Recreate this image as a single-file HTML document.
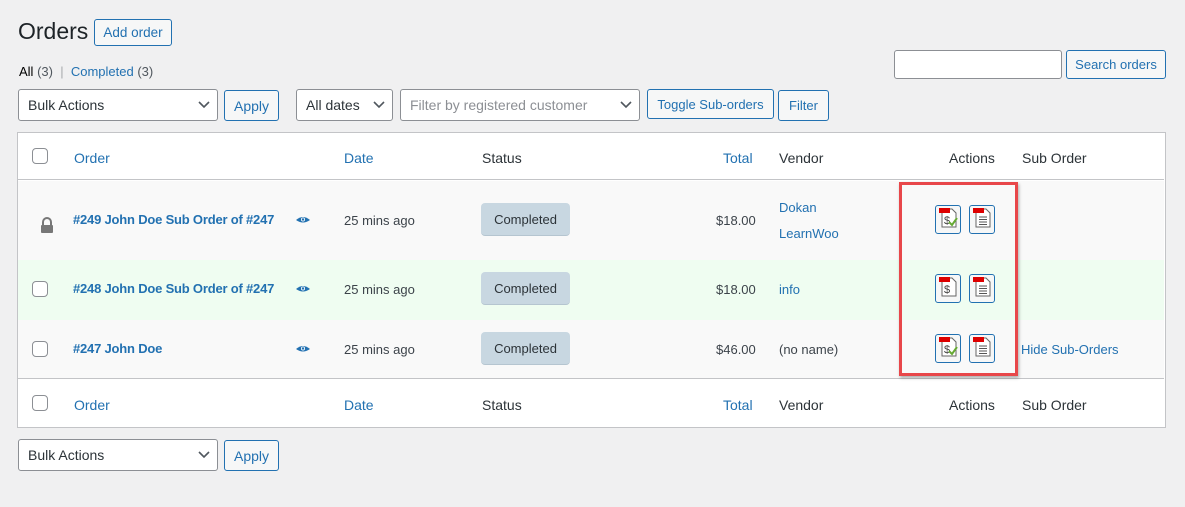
<!DOCTYPE html>
<html><head><style>
*{box-sizing:border-box;margin:0;padding:0}
body{width:1185px;height:507px;background:#f0f0f1;font-family:"Liberation Sans",Arial,sans-serif;font-size:13px;color:#3c434a;position:relative;overflow:hidden}
.a{position:absolute;white-space:nowrap}
.btn{position:absolute;border:1px solid #2271b1;border-radius:3px;background:#f6f7f7;color:#2271b1;font-size:13px;display:flex;align-items:center;justify-content:center}
.sel{position:absolute;border:1px solid #8c8f94;border-radius:3px;background:#fff;font-size:14px;color:#2c3338;padding-left:9px;display:flex;align-items:center}
.sel svg{position:absolute;right:7px;top:50%;margin-top:-4px}
.inp{position:absolute;border:1px solid #8c8f94;border-radius:3px;background:#fff}
.link{color:#2271b1}
.cb{position:absolute;width:16px;height:16px;border:1px solid #8c8f94;border-radius:4px;background:#fff}
.row{position:absolute;left:18px;width:1146px}
.status{position:absolute;width:89px;height:33px;background:#c8d7e1;border-radius:4px;color:#2c3338;font-size:13px;display:flex;align-items:center;justify-content:center;border-bottom:1px solid #b5c5d0}
.bold{font-weight:bold;color:#2271b1;font-size:13px;letter-spacing:-0.2px}
.ib{position:absolute;width:26px;height:29px;border:1px solid #2271b1;border-radius:3px;background:#f6f7f7}
</style></head><body>
<div class="a" style="left:18px;top:18px;font-size:23px;color:#1d2327">Orders</div>
<div class="btn" style="left:94px;top:19px;width:78px;height:27px;font-size:13.5px">Add order</div>
<div class="a" style="left:19px;top:64px;font-size:13px"><span style="color:#000">All</span> <span style="color:#50575e">(3)</span> <span style="color:#a7aaad">&nbsp;|&nbsp;</span> <span class="link">Completed</span> <span style="color:#50575e">(3)</span></div>
<div class="inp" style="left:894px;top:50px;width:168px;height:29px"></div>
<div class="btn" style="left:1066px;top:50px;width:100px;height:29px">Search orders</div>

<svg width="0" height="0" style="position:absolute"><defs><path id="ch" d="M1 1l5 5 5-5" fill="none" stroke="#50575e" stroke-width="1.6"/></defs></svg>
<div class="sel" style="left:18px;top:89px;width:200px;height:32px">Bulk Actions<svg width="12" height="8"><use href="#ch"/></svg></div>
<div class="btn" style="left:224px;top:90px;width:55px;height:31px;font-size:14px">Apply</div>
<div class="sel" style="left:296px;top:89px;width:97px;height:32px">All dates<svg width="12" height="8"><use href="#ch"/></svg></div>
<div class="sel" style="left:400px;top:89px;width:240px;height:32px;color:#8c8f94">Filter by registered customer<svg width="12" height="8"><use href="#ch"/></svg></div>
<div class="btn" style="left:647px;top:89px;width:127px;height:30px">Toggle Sub-orders</div>
<div class="btn" style="left:778px;top:90px;width:51px;height:31px">Filter</div>

<div style="position:absolute;left:17px;top:132px;width:1149px;height:296px;border:1px solid #c3c4c7;background:#fff"></div>
<div class="row" style="top:133px;height:47px;background:#fff;border-bottom:1px solid #c3c4c7"></div>
<div class="row" style="top:181px;height:79px;background:#f9f9f9"></div>
<div class="row" style="top:260px;height:60px;background:#effdf1"></div>
<div class="row" style="top:320px;height:58px;background:#f9f9f9"></div>
<div class="row" style="top:378px;height:49px;background:#fff;border-top:1px solid #c3c4c7"></div>

<div class="cb" style="left:32px;top:148px"></div>
<div class="a link" style="left:74px;top:150px;font-size:14px">Order</div>
<div class="a link" style="left:344px;top:150px;font-size:14px">Date</div>
<div class="a" style="left:482px;top:150px;font-size:14px;color:#2c3338">Status</div>
<div class="a link" style="left:723px;top:150px;font-size:14px">Total</div>
<div class="a" style="left:779px;top:150px;font-size:14px;color:#2c3338">Vendor</div>
<div class="a" style="left:949px;top:150px;font-size:14px;color:#2c3338">Actions</div>
<div class="a" style="left:1022px;top:150px;font-size:14px;color:#2c3338">Sub Order</div>
<div class="cb" style="left:32px;top:395px"></div>
<div class="a link" style="left:74px;top:397px;font-size:14px">Order</div>
<div class="a link" style="left:344px;top:397px;font-size:14px">Date</div>
<div class="a" style="left:482px;top:397px;font-size:14px;color:#2c3338">Status</div>
<div class="a link" style="left:723px;top:397px;font-size:14px">Total</div>
<div class="a" style="left:779px;top:397px;font-size:14px;color:#2c3338">Vendor</div>
<div class="a" style="left:949px;top:397px;font-size:14px;color:#2c3338">Actions</div>
<div class="a" style="left:1022px;top:397px;font-size:14px;color:#2c3338">Sub Order</div>

<svg width="0" height="0" style="position:absolute"><defs>
<g id="eye"><path d="M0 4Q7 -2 14 4Q7 9 0 4Z" fill="#2271b1"/><circle cx="7" cy="3.5" r="2" fill="#fff"/><circle cx="7" cy="3.5" r="1.2" fill="#2271b1"/></g>
<g id="inv"><path d="M6 3h10l4 4v14H6z" fill="#fff" stroke="#666"/><rect x="3" y="2" width="11" height="5" fill="#d00"/><text x="8" y="18" font-size="11" font-family="Liberation Sans" fill="#444">$</text></g>
<g id="doc"><path d="M6 3h10l4 4v14H6z" fill="#fff" stroke="#666"/><rect x="3" y="2" width="11" height="5" fill="#d00"/><path d="M9 11h8M9 13.5h8M9 16h8M9 18.5h8" stroke="#555"/></g>
<path id="ck" d="M13 16l3 3 5-7" fill="none" stroke="#6a3" stroke-width="2"/>
</defs></svg>

<svg class="a" style="left:40px;top:217px" width="14" height="16"><path d="M3 8V5a4 4 0 0 1 8 0v3" fill="none" stroke="#777" stroke-width="2"/><rect x="1" y="8" width="12" height="8" rx="1" fill="#777"/></svg>
<div class="a bold" style="left:73px;top:212px">#249 John Doe Sub Order of #247</div>
<svg class="a" style="left:296px;top:216px" width="14" height="8"><use href="#eye"/></svg>
<div class="a" style="left:344px;top:213px">25 mins ago</div>
<div class="status" style="left:481px;top:203px">Completed</div>
<div class="a" style="left:716px;top:213px">$18.00</div>
<div class="a link" style="left:779px;top:200px">Dokan</div>
<div class="a link" style="left:779px;top:226px">LearnWoo</div>
<div class="cb" style="left:32px;top:281px"></div>
<div class="a bold" style="left:73px;top:281px">#248 John Doe Sub Order of #247</div>
<svg class="a" style="left:296px;top:285px" width="14" height="8"><use href="#eye"/></svg>
<div class="a" style="left:344px;top:282px">25 mins ago</div>
<div class="status" style="left:481px;top:272px">Completed</div>
<div class="a" style="left:716px;top:282px">$18.00</div>
<div class="a link" style="left:779px;top:282px">info</div>
<div class="cb" style="left:32px;top:341px"></div>
<div class="a bold" style="left:73px;top:341px">#247 John Doe</div>
<svg class="a" style="left:296px;top:345px" width="14" height="8"><use href="#eye"/></svg>
<div class="a" style="left:344px;top:342px">25 mins ago</div>
<div class="status" style="left:481px;top:332px">Completed</div>
<div class="a" style="left:716px;top:342px">$46.00</div>
<div class="a" style="left:779px;top:342px">(no name)</div>
<div class="a link" style="left:1021px;top:342px">Hide Sub-Orders</div>

<div class="ib" style="left:935px;top:205px"><svg width="24" height="27"><use href="#inv"/><use href="#ck"/></svg></div>
<div class="ib" style="left:969px;top:205px"><svg width="24" height="27"><use href="#doc"/></svg></div>
<div class="ib" style="left:935px;top:274px"><svg width="24" height="27"><use href="#inv"/></svg></div>
<div class="ib" style="left:969px;top:274px"><svg width="24" height="27"><use href="#doc"/></svg></div>
<div class="ib" style="left:935px;top:334px"><svg width="24" height="27"><use href="#inv"/><use href="#ck"/></svg></div>
<div class="ib" style="left:969px;top:334px"><svg width="24" height="27"><use href="#doc"/></svg></div>
<div style="position:absolute;left:899px;top:182px;width:119px;height:194px;border:3px solid #e8474a;box-shadow:1px 2px 3px rgba(0,0,0,.3)"></div>

<div class="sel" style="left:18px;top:439px;width:200px;height:32px">Bulk Actions<svg width="12" height="8"><use href="#ch"/></svg></div>
<div class="btn" style="left:224px;top:440px;width:55px;height:31px;font-size:14px">Apply</div>
</body></html>
